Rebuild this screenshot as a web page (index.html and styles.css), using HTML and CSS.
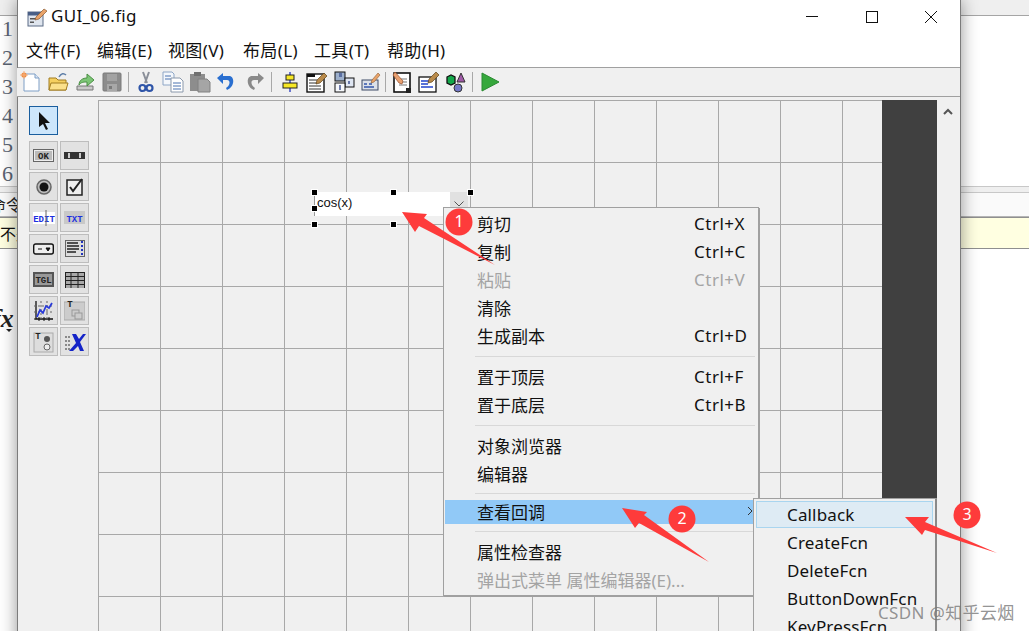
FILE: index.html
```html
<!DOCTYPE html>
<html lang="zh">
<head>
<meta charset="utf-8">
<title>GUI_06.fig</title>
<link rel="stylesheet" href="styles.css">
</head>
<body>
<div class="desk">
  <div class="bg-tabs"></div>
  <div class="bg-code">
    <span>1</span><span>2</span><span>3</span><span>4</span><span>5</span><span>6</span>
  </div>
  <div class="bg-gap"></div>
  <div class="bg-head">命令</div>
  <div class="bg-warn">不是</div>
  <div class="bg-cmd"><i>fx</i><b class="fx-caret"></b></div>

  <section class="window">
    <header class="titlebar">
      <svg class="app-icon" width="21" height="20" viewBox="0 0 21 20">
        <rect x="1" y="5" width="15" height="14" fill="#dfe5ee" stroke="#5b6b85"/>
        <rect x="1" y="5" width="15" height="3.5" fill="#4a5f86"/>
        <rect x="3" y="11" width="6" height="1.5" fill="#555"/>
        <rect x="3" y="14.5" width="4" height="1.5" fill="#555"/>
        <path d="M8 13l1-3 8-8 3 2-8 8z" fill="#e9a36a" stroke="#8a5a30" stroke-width=".7"/>
      </svg>
      <span class="title">GUI_06.fig</span>
      <div class="winctl">
        <span class="min"></span><span class="max"></span>
        <svg width="14" height="14" viewBox="0 0 14 14"><path d="M1 1l12 12M13 1L1 13" stroke="#111" fill="none"/></svg>
      </div>
    </header>
    <nav class="menubar">
      <span>文件(F)</span><span>编辑(E)</span><span>视图(V)</span><span>布局(L)</span><span>工具(T)</span><span>帮助(H)</span>
    </nav>
    <div class="toolbar">
      <span class="tool"><svg width="22" height="22" viewBox="0 0 22 22"><path d="M4 3h11l4 4v13H4z" fill="#fff" stroke="#7f9fc6"/><path d="M15 3v4h4" fill="#dbe6f3" stroke="#7f9fc6"/><circle cx="4" cy="4" r="2.6" fill="#f08a3c"/><path d="M4 0v8M0 4h8" stroke="#f4b080"/></svg></span>
      <span class="tool"><svg width="22" height="22" viewBox="0 0 22 22"><path d="M2 7h7l2 2h8v10H2z" fill="#f5cf5f" stroke="#a17c22"/><path d="M2 19l2-7h17l-2 7z" fill="#fbe08b" stroke="#a17c22"/><path d="M12 6c2-4 5-4 7-2" fill="none" stroke="#5f7fa8" stroke-width="1.5"/></svg></span>
      <span class="tool"><svg width="22" height="22" viewBox="0 0 22 22"><path d="M3 15h16v4H3z" fill="#c9c9c9" stroke="#777"/><path d="M5 14c0-5 4-7 8-7V3l7 6-7 6v-4c-3 0-6 0-8 3z" fill="#7cc576" stroke="#4b8f45"/></svg></span>
      <span class="tool"><svg width="22" height="22" viewBox="0 0 22 22"><rect x="2" y="2" width="18" height="18" rx="1" fill="#8c8c8c" stroke="#7a7a7a"/><rect x="6" y="3" width="10" height="7" fill="#a3a3a3"/><rect x="6" y="13" width="10" height="7" fill="#a8a8a8"/><rect x="8" y="15" width="3" height="3" fill="#7a7a7a"/></svg></span>
      <span class="tool-sep"></span>
      <span class="tool"><svg width="22" height="22" viewBox="0 0 22 22"><path d="M8 1l4 11M14 1l-4 11" stroke="#8a8f99" stroke-width="2" fill="none"/><circle cx="7.5" cy="17" r="3" fill="none" stroke="#2f55a8" stroke-width="2.2"/><circle cx="14.5" cy="17" r="3" fill="none" stroke="#2f55a8" stroke-width="2.2"/></svg></span>
      <span class="tool"><svg width="22" height="22" viewBox="0 0 22 22"><path d="M1 1h9l2 2v11H1z" fill="#f4f7fb" stroke="#8ea6c6"/><path d="M3 5h6M3 8h6" stroke="#4a72b0"/><path d="M9 7h9l3 3v11H9z" fill="#fff" stroke="#8a98ab"/><path d="M11 12h8M11 15h8M11 18h8" stroke="#4a72b0"/></svg></span>
      <span class="tool"><svg width="22" height="22" viewBox="0 0 22 22"><rect x="1" y="3" width="15" height="17" fill="#8d8d8d"/><rect x="5" y="1" width="7" height="4" fill="#707070"/><path d="M9 8h9l3 3v10H9z" fill="#a5a5a5" stroke="#808080"/></svg></span>
      <span class="tool"><svg width="22" height="22" viewBox="0 0 22 22"><path d="M7 5h6c6 0 6 11-2 14l-1-2c4-2 5-8 1-8H7v4L1 7l6-5z" fill="#2a6fd0"/></svg></span>
      <span class="tool"><svg width="22" height="22" viewBox="0 0 22 22"><path d="M15 5H9C3 5 3 16 11 19l1-2C8 15 7 9 11 9h4v4l6-6-6-5z" fill="#8a8a8a"/></svg></span>
      <span class="tool-sep tool-sep-wide"></span>
      <span class="tool"><svg width="22" height="22" viewBox="0 0 22 22"><path d="M11 1v20" stroke="#2233bb" stroke-width="1.3"/><rect x="7" y="4" width="8" height="5" fill="#f7e826" stroke="#222"/><rect x="4" y="12" width="14" height="5" fill="#f7e826" stroke="#222"/></svg></span>
      <span class="tool"><svg width="22" height="22" viewBox="0 0 22 22"><rect x="1" y="3" width="17" height="18" fill="#fff" stroke="#111" stroke-width="1.4"/><rect x="1" y="3" width="8" height="3" fill="#111"/><path d="M3 9h8M3 12h8M3 15h12M3 18h12" stroke="#333"/><path d="M10 13l1-4 7-7 3 3-7 7z" fill="#b98a4a" stroke="#5d4218" stroke-width=".7"/></svg></span>
      <span class="tool"><svg width="22" height="22" viewBox="0 0 22 22"><rect x="2" y="1" width="10" height="9" fill="#9db0cc" stroke="#111"/><rect x="12" y="7" width="9" height="9" fill="#dfe6f2" stroke="#111"/><rect x="2" y="12" width="10" height="9" fill="#f6f8fb" stroke="#111"/><path d="M6 3h3M6 5h3M16 10v3M7 14v5" stroke="#1a2f7a" stroke-width="1.2"/></svg></span>
      <span class="tool"><svg width="22" height="22" viewBox="0 0 22 22"><rect x="2" y="9" width="16" height="10" fill="#dbe0e8" stroke="#3d4b66"/><path d="M4 13h3M9 13h3M4 16h10" stroke="#3355aa" stroke-width="1.4"/><path d="M11 12l1-3 6-7 2 2-6 7z" fill="#e9a36a" stroke="#8a5a30" stroke-width=".6"/></svg></span>
      <span class="tool-sep tool-sep-narrow"></span>
      <span class="tool"><svg width="22" height="22" viewBox="0 0 22 22"><rect x="3" y="2" width="16" height="19" fill="#fff" stroke="#111" stroke-width="1.6"/><path d="M8 8h8M8 11h8M8 14h8" stroke="#777"/><path d="M2 4l2-3 8 9-1 3-3-1z" fill="#e8a070" stroke="#96502c" stroke-width=".7"/><rect x="15" y="17" width="5" height="5" fill="#222"/></svg></span>
      <span class="tool"><svg width="22" height="22" viewBox="0 0 22 22"><rect x="1" y="6" width="17" height="15" fill="#fff" stroke="#111" stroke-width="1.3"/><path d="M3 10h8M3 13h7M3 16h12" stroke="#2244cc" stroke-width="1.3"/><path d="M10 12l1-4 7-7 3 3-7 7z" fill="#b98a4a" stroke="#5d4218" stroke-width=".7"/></svg></span>
      <span class="tool"><svg width="22" height="22" viewBox="0 0 22 22"><path d="M2 6l4-2 4 2v6l-4 2-4-2z" fill="#13a84a" stroke="#111" stroke-width="1.300"/><path d="M16 2l4 9h-8z" fill="#a05aa8" stroke="#333"/><circle cx="13" cy="17" r="4" fill="#7478c8" stroke="#333"/></svg></span>
      <span class="tool-sep"></span>
      <span class="tool"><svg width="22" height="22" viewBox="0 0 22 22"><path d="M3 2l17 9-17 9z" fill="#36a83c" stroke="#2b8a32"/></svg></span>
    </div>
    <div class="workspace">
      <aside class="palette">
        <button class="pal pal-active"><svg width="20" height="22" viewBox="0 0 20 22"><path d="M5 2v15l4-3 3 6 2-1-3-6h5z" fill="#111"/></svg></button>
        <div class="pal-grid">
          <button class="pal"><svg width="21" height="13" viewBox="0 0 21 13"><rect x=".5" y=".5" width="20" height="12" fill="#eee" stroke="#666"/><rect x="2" y="2" width="17" height="9" fill="#bbb"/><text x="10.500" y="10" class="pal-t pal-dark">OK</text></svg></button>
          <button class="pal"><svg width="21" height="9" viewBox="0 0 21 9"><rect width="21" height="7" y="1" fill="#333"/><rect x="4" y="2" width="2" height="5" fill="#ccc"/><rect x="15" y="2" width="2" height="5" fill="#ccc"/></svg></button>
          <button class="pal"><svg width="20" height="20" viewBox="0 0 20 20"><circle cx="10" cy="10" r="7" fill="#bbb" stroke="#666" stroke-width="1.500"/><circle cx="10" cy="10" r="4.500" fill="#111"/></svg></button>
          <button class="pal"><svg width="20" height="20" viewBox="0 0 20 20"><rect x="2" y="3" width="15" height="15" fill="#eee" stroke="#222" stroke-width="1.500"/><path d="M5 10l3 4 9-12" fill="none" stroke="#222" stroke-width="2"/></svg></button>
          <button class="pal"><svg width="22" height="16" viewBox="0 0 22 16"><rect y="2" width="22" height="12" fill="#fff"/><text x="11" y="12" class="pal-t pal-blue">EDIT</text><path d="M13 0v16" stroke="#666"/></svg></button>
          <button class="pal"><svg width="21" height="13" viewBox="0 0 21 13"><rect width="21" height="13" fill="#c8c8c8"/><text x="10.500" y="10.500" class="pal-t pal-blue">TXT</text></svg></button>
          <button class="pal"><svg width="21" height="12" viewBox="0 0 21 12"><rect x=".7" y="1" width="19.600" height="10" rx="2" fill="#eee" stroke="#111" stroke-width="1.400"/><path d="M5 6h4M13 5h4l-2 3z" fill="#111" stroke="#111"/></svg></button>
          <button class="pal"><svg width="20" height="17" viewBox="0 0 20 17"><rect x=".5" y=".5" width="19" height="16" fill="#ddd" stroke="#666"/><path d="M2 3h11M2 6h12M2 9h12M2 12h9" stroke="#222" stroke-width="1.300"/><path d="M17 1v15" stroke="#2233bb" stroke-dasharray="2 2" stroke-width="2"/></svg></button>
          <button class="pal"><svg width="21" height="15" viewBox="0 0 21 15"><rect width="21" height="15" fill="#555"/><rect x="2" y="2" width="17" height="11" fill="#999"/><text x="10.500" y="10.500" class="pal-t pal-dark">TGL</text></svg></button>
          <button class="pal"><svg width="20" height="16" viewBox="0 0 20 16"><rect width="20" height="16" fill="#a9a9a9"/><path d="M0 .5h20M0 4.500h20M0 8.500h20M0 12.500h20M.5 0v16M6 0v16M13 0v16M19.500 0v16" stroke="#222"/></svg></button>
          <button class="pal"><svg width="21" height="21" viewBox="0 0 21 21"><path d="M3 1v18h17" stroke="#111" fill="none" stroke-width="1.300"/><path d="M1 6h19M1 12h19M8 1v19M14 1v19" stroke="#666" fill="none" stroke-dasharray="2 2"/><path d="M1 19h2M6 17v4M11 17v4M16 17v4" stroke="#111"/><path d="M4 17l3-7 3 3 3-7 3 2 3-5" stroke="#2a3bd8" stroke-width="1.800" fill="none"/></svg></button>
          <button class="pal"><svg width="21" height="21" viewBox="0 0 21 21"><rect x="0" y="2" width="21" height="18" fill="#ccc" stroke="#aaa"/><rect x="8" y="10" width="7" height="6" fill="none" stroke="#999"/><rect x="11" y="13" width="7" height="6" fill="#ccc" stroke="#999"/><text x="6" y="7" class="pal-t pal-dark">T</text></svg></button>
          <button class="pal"><svg width="21" height="22" viewBox="0 0 21 22"><rect x="1" y="2" width="19" height="19" fill="#ddd" stroke="#aaa"/><text x="5" y="8" class="pal-t pal-dark">T</text><circle cx="14" cy="8" r="3" fill="#555"/><circle cx="14" cy="16" r="3" fill="#eee" stroke="#666"/></svg></button>
          <button class="pal"><svg width="22" height="18" viewBox="0 0 22 18"><path d="M1 4h6M1 8h6M1 12h6M1 16h6" stroke="#333" stroke-dasharray="2 1"/><path d="M8 1h4l3 5 4-5h3l-6 8 4 9h-4l-2-5-5 5H5l7-8z" fill="#1424c8"/></svg></button>
        </div>
      </aside>
      <div class="canvas">
        <div class="grid">
          <div class="popup">
            <span class="popup-text">cos(x)</span>
            <span class="popup-btn"><svg width="10" height="6" viewBox="0 0 10 6"><path d="M.5.5L5 5 9.500.5" fill="none" stroke="#555"/></svg></span>
            <i class="handle h-tl"></i><i class="handle h-tm"></i><i class="handle h-tr"></i>
            <i class="handle h-ml"></i><i class="handle h-bl"></i><i class="handle h-bm"></i>
          </div>
        </div>
        <div class="dark-panel"></div>
      </div>
      <div class="scroll">
        <svg width="10" height="7" viewBox="0 0 10 7"><path d="M1 6l4-4 4 4" fill="none" stroke="#555" stroke-width="2"/></svg>
      </div>
    </div>
  </section>

  <div class="ctx">
    <div class="row"><span>剪切</span><span class="key">Ctrl+X</span></div>
    <div class="row"><span>复制</span><span class="key">Ctrl+C</span></div>
    <div class="row off"><span>粘贴</span><span class="key">Ctrl+V</span></div>
    <div class="row"><span>清除</span></div>
    <div class="row"><span>生成副本</span><span class="key">Ctrl+D</span></div>
    <div class="sep"></div>
    <div class="row"><span>置于顶层</span><span class="key">Ctrl+F</span></div>
    <div class="row"><span>置于底层</span><span class="key">Ctrl+B</span></div>
    <div class="sep"></div>
    <div class="row"><span>对象浏览器</span></div>
    <div class="row"><span>编辑器</span></div>
    <div class="sep sep-short"></div>
    <div class="row row-hi"><span>查看回调</span><svg class="caret" width="6" height="10" viewBox="0 0 6 10"><path d="M1 1l4 4-4 4" fill="none" stroke="#333"/></svg></div>
    <div class="sep sep-mid"></div>
    <div class="row"><span>属性检查器</span></div>
    <div class="row off"><span>弹出式菜单 属性编辑器(E)...</span></div>
  </div>

  <div class="sub">
    <div class="sub-row sub-hover">Callback</div>
    <div class="sub-row">CreateFcn</div>
    <div class="sub-row">DeleteFcn</div>
    <div class="sub-row">ButtonDownFcn</div>
    <div class="sub-row">KeyPressFcn</div>
  </div>

  <svg class="marks" width="1029" height="631" viewBox="0 0 1029 631">
    <g fill="#fe3b3b">
      <path d="M402 212L427 214 424 218 495 265 419 226 415 232z"/>
      <path d="M622 508L647 512 644 515 709 562 639 523 635 528z"/>
      <path d="M905 517L929 517 925 522 997 553 925 530 922 535z"/>
      <circle cx="459" cy="222" r="13.500"/>
      <circle cx="682" cy="519" r="13.500"/>
      <circle cx="967" cy="515" r="13.500"/>
    </g>
    <g class="mark-n">
      <text x="459" y="227">1</text>
      <text x="682" y="524">2</text>
      <text x="967" y="520">3</text>
    </g>
  </svg>

  <div class="watermark">CSDN @知乎云烟</div>
</div>
</body>
</html>
```
FILE: styles.css
```css
* { box-sizing: border-box; }
html, body { margin: 0; padding: 0; background: #fff; }
body { font-family: "Noto Sans", "Noto Sans CJK SC", sans-serif; color: #111; }

.desk {
  position: relative;
  width: 1029px;
  height: 631px;
  overflow: hidden;
  display: flex;
  flex-direction: column;
  background: #fff;
}

/* desktop behind the window */
.bg-tabs { height: 16px; background: #efefef; border-bottom: 1px solid #a5a5a5; }
.bg-code {
  height: 170px;
  display: flex;
  flex-direction: column;
  font: 22px/29px "Liberation Serif", serif;
  color: #5a6472;
  padding: 0 0 0 2px;
}
.bg-code span { height: 29px; flex: none; position: relative; top: -2px; }
.bg-gap { height: 7px; background: #efefef; border-top: 1px solid #c8c8c8; border-bottom: 1px solid #c8c8c8; }
.bg-head {
  height: 24px;
  background: #fafafa;
  border-bottom: 1px solid #b5b5b5;
  font: 16px/22px "Noto Sans CJK SC", sans-serif;
  text-indent: -10px;
  overflow: hidden;
  color: #222;
}
.bg-warn {
  height: 32px;
  background: #ffffe1;
  border-top: 1px solid #8f8f8f;
  border-bottom: 1px solid #8f8f8f;
  font: 16px/30px "Noto Sans CJK SC", sans-serif;
  color: #111;
}
.bg-cmd { position: relative; height: 100px; padding-top: 56px; font: italic 700 26px/28px "Liberation Serif", serif; text-indent: -8px; color: #222; }
.bg-cmd i { font-style: italic; }
.fx-caret {
  position: absolute; left: 6px; top: 80px;
  border: 3px solid transparent; border-top-color: #222; border-bottom: 0;
}

/* figure window */
.window {
  position: absolute;
  left: 17px;
  top: 0;
  width: 944px;
  height: 660px;
  display: flex;
  flex-direction: column;
  background: #f0f0f0;
  border-left: 1px solid #7c7c7c;
  border-right: 1px solid #7c7c7c;
  box-shadow: 0 0 16px rgba(0, 0, 0, .42);
}
.titlebar {
  height: 33px;
  flex: none;
  background: #fff;
  display: flex;
  align-items: center;
  padding-left: 9px;
}
.app-icon { flex: none; }
.title { margin: 0 0 2px 3px; font-size: 17px; letter-spacing: .3px; color: #111; }
.winctl {
  margin-left: auto;
  display: flex;
  align-items: center;
  width: 154px;
  flex: none;
}
.winctl .min { width: 12px; height: 1px; background: #111; flex: none; }
.winctl .max { width: 12px; height: 12px; border: 1px solid #111; margin: 0 46px 0 48px; flex: none; }
.menubar {
  height: 35px;
  flex: none;
  background: #fff;
  border-bottom: 1px solid #a0a0a0;
  display: grid;
  grid-template-columns: 71px 71px 75px 71px 73px auto;
  align-items: center;
  justify-content: start;
  padding: 0 0 2px 8px;
  font-size: 17px;
  letter-spacing: .35px;
}
.toolbar {
  height: 29px;
  flex: none;
  background: #f0f0f0;
  border-bottom: 1px solid #a0a0a0;
  display: flex;
  align-items: center;
  margin-left: -1px;
}
.tool { width: 27px; height: 22px; display: flex; justify-content: center; flex: none; }
.tool-sep { width: 7px; height: 20px; flex: none; background: linear-gradient(#a8a8a8, #a8a8a8) center / 1px 100% no-repeat; }
.tool-sep-wide { width: 9px; }
.tool-sep-narrow { margin-left: -2px; margin-right: -1px; }

.workspace { flex: 1; display: flex; min-height: 0; }
.palette {
  width: 80px;
  flex: none;
  padding: 9px 0 0 11px;
  display: flex;
  flex-direction: column;
  gap: 6px;
}
.pal {
  width: 29px;
  height: 29px;
  padding: 0;
  background: #e2e2e2;
  border: 1px solid #bdbdbd;
  display: flex;
  align-items: center;
  justify-content: center;
}
.pal-active { background: #cde6fb; border: 1px solid #1a5e9e; }
.pal-grid { display: grid; grid-template-columns: 29px 29px; grid-auto-rows: 29px; gap: 2px; }
.pal-t { font: 700 9px "Liberation Mono", monospace; text-anchor: middle; fill: #333; }
.pal-blue { fill: #1c2fe0; }
.pal-dark { fill: #222; }

.canvas { flex: none; width: 839px; display: flex; padding-top: 3px; }
.grid {
  position: relative;
  width: 784px;
  background-color: #f0f0f0;
  background-image:
    linear-gradient(#a8a8a8 1px, transparent 1px),
    linear-gradient(90deg, #a8a8a8 1px, transparent 1px);
  background-size: 62px 62px;
}
.dark-panel { width: 55px; background: #404040; }
.scroll { flex: 1; display: flex; justify-content: center; padding: 11px 2px 0 0; }

.popup {
  position: absolute;
  left: 216px;
  top: 92px;
  width: 154px;
  height: 24px;
  background: #fff;
  display: flex;
  align-items: center;
  border-left: 1px solid #999;
}
.popup-text { font: 13px "Liberation Sans", sans-serif; padding: 0 0 3px 2px; color: #111; }
.popup-btn {
  margin-left: auto;
  width: 18px;
  height: 100%;
  background: #e1e1e1;
  display: flex;
  align-items: center;
  justify-content: center;
}
.handle { position: absolute; width: 7px; height: 7px; background: #000; border: 1px solid #fff; }
.h-tl { left: -4px; top: -3px; }
.h-tm { left: 75px; top: -3px; }
.h-tr { left: 152px; top: -3px; }
.h-ml { left: -4px; top: 13px; }
.h-bl { left: -4px; top: 29px; }
.h-bm { left: 75px; top: 29px; }

/* context menu */
.ctx {
  position: absolute;
  left: 443px;
  top: 207px;
  width: 316px;
  height: 389px;
  background: #f0f0f0;
  border: 1px solid #a0a0a0;
  padding-top: 2px;
  font-size: 17px;
  box-shadow: 1px 1px 0 #a0a0a0;
}
.row { height: 28px; display: flex; align-items: center; justify-content: space-between; padding: 0 0 2px 33px; color: #111; }
.row .key { width: 64px; flex: none; letter-spacing: .5px; }
.off { color: #a4a4a4; }
.sep { height: 13px; margin: 0 3px 0 31px; background: linear-gradient(#d8d8d8, #d8d8d8) 0 6px / 100% 1px no-repeat; }
.sep-short { height: 10px; background-position: 0 5px; }
.sep-mid { height: 12px; background-position: 0 5px; }
.row-hi {
  margin: 0 4px 0 1px;
  padding: 0 0 2px 32px;
  background: #91c9f7;
  background-clip: padding-box;
  border-top: 2px solid transparent;
  border-bottom: 2px solid transparent;
}
.caret { margin-right: 1px; }

.sub {
  position: absolute;
  left: 753px;
  top: 498px;
  width: 184px;
  height: 160px;
  background: #f0f0f0;
  border: 1px solid #a0a0a0;
  border-right: 2px solid #8a8a8a;
  padding: 2px 2px 0;
  font-size: 17px;
  letter-spacing: .15px;
}
.sub-row { height: 28px; display: flex; align-items: center; padding: 0 0 2px 31px; color: #111; }
.sub-hover {
  height: 27px;
  margin-bottom: 1px;
  background: #deebf4;
  border: 1px solid #a9d5ef;
  padding: 0 0 0 30px;
}

.marks { position: absolute; left: 0; top: 0; pointer-events: none; }
.mark-n { font: 16px "Noto Sans", sans-serif; fill: #fff; text-anchor: middle; }

.watermark {
  position: absolute;
  left: 878px;
  top: 599px;
  font-size: 17px;
  color: rgba(120, 120, 120, .8);
  letter-spacing: .35px;
  white-space: nowrap;
}
```
